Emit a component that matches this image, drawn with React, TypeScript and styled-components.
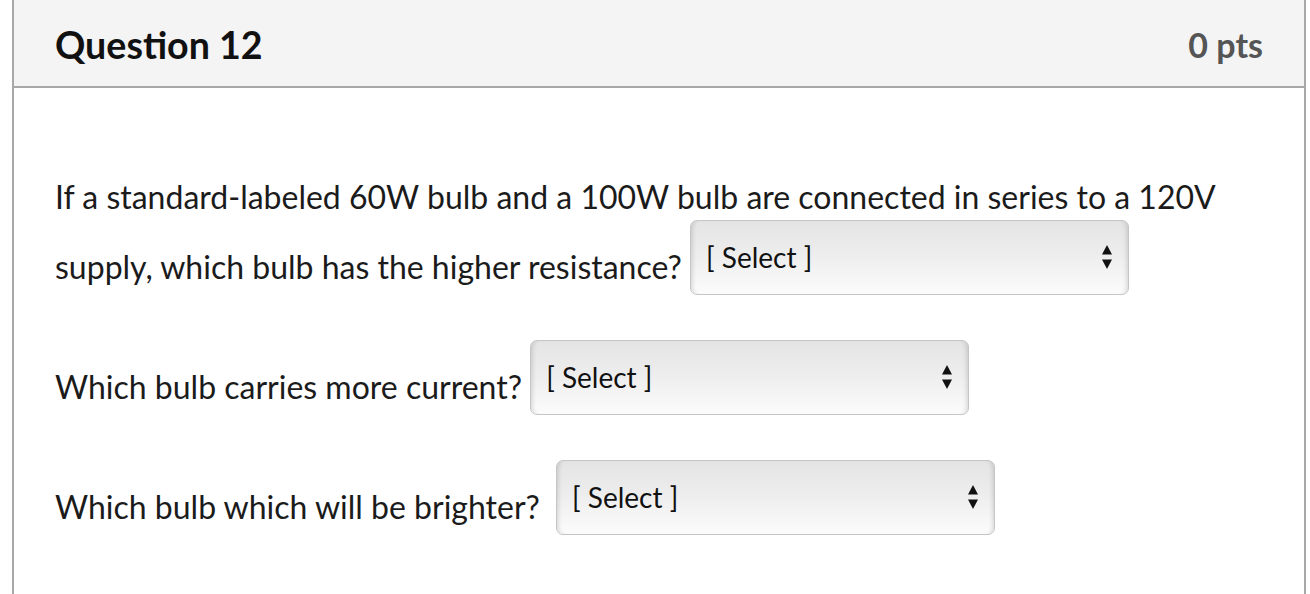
import styled, { createGlobalStyle } from "styled-components";

const GlobalStyle = createGlobalStyle`
  body {
    margin: 0;
    background: #ffffff;
    font-family: Lato, "Liberation Sans", sans-serif;
    overflow: hidden;
  }
`;

const questions = [
  {
    id: "q1",
    text: "If a standard-labeled 60W bulb and a 100W bulb are connected in series to a 120V supply, which bulb has the higher resistance?",
    gap: 0,
  },
  { id: "q2", text: "Which bulb carries more current?", gap: 0 },
  { id: "q3", text: "Which bulb which will be brighter?", gap: 8 },
];

const Arrows = () => (
  <svg width="10" height="24" viewBox="0 0 10 24">
    <path d="M5 0 L10 9.5 L0 9.5 Z" fill="#111" />
    <path d="M0 14.5 L10 14.5 L5 24 Z" fill="#111" />
  </svg>
);

const App = () => {
  return (
    <>
      <GlobalStyle />
      <Page>
        <Card>
          <Header>
            <Title>Question 12</Title>
            <Points>0 pts</Points>
          </Header>
          <Body>
            {questions.map((q) => (
              <Paragraph key={q.id}>
                {q.text}{" "}
                <SelectWrap $gap={q.gap}>
                  <StyledSelect defaultValue="">
                    <option value="">[ Select ]</option>
                    <option value="60">60W bulb</option>
                    <option value="100">100W bulb</option>
                    <option value="same">Same</option>
                  </StyledSelect>
                  <ArrowBox>
                    <Arrows />
                  </ArrowBox>
                </SelectWrap>
              </Paragraph>
            ))}
          </Body>
        </Card>
      </Page>
    </>
  );
};

export default App;

const Page = styled.div`
  padding: 0 4px 0 12px;
`;

const Card = styled.div`
  border: 2px solid #a8a8a8;
  border-top: none;
  min-height: 640px;
`;

const Header = styled.div`
  display: flex;
  justify-content: space-between;
  align-items: center;
  height: 86px;
  padding: 0 41px 0 41px;
  background: #f4f4f4;
  border-bottom: 2px solid #a8a8a8;
`;

const Title = styled.h2`
  margin: 0;
  font-size: 37.6px;
  font-weight: 700;
  color: #111;
  padding-top: 2px;
`;

const Points = styled.div`
  font-size: 34px;
  font-weight: 700;
  color: #555;
  padding-top: 2px;
`;

const Body = styled.div`
  padding: 87px 41px 0 41px;
`;

const Paragraph = styled.p`
  margin: 0 0 45px;
  font-size: 32px;
  line-height: 1.4;
  color: #1b1b1b;
`;

const SelectWrap = styled.span<{ $gap: number }>`
  position: relative;
  display: inline-block;
  vertical-align: 10px;
  margin-left: ${(p) => p.$gap}px;
`;

const StyledSelect = styled.select`
  appearance: none;
  -webkit-appearance: none;
  width: 439px;
  height: 75px;
  padding: 0 40px 0 15px;
  font-family: Lato, "Liberation Sans", sans-serif;
  font-size: 28px;
  color: #111;
  border: 1px solid #c6c6c6;
  border-radius: 7px;
  background: linear-gradient(#e4e4e4 0%, #ededed 45%, #fcfcfc 100%);
  box-shadow: inset 5px 0 5px -4px rgba(0, 0, 0, 0.16),
    inset -5px 0 5px -4px rgba(0, 0, 0, 0.16);
  outline: none;
`;

const ArrowBox = styled.span`
  position: absolute;
  right: 17px;
  top: 0;
  bottom: 0;
  display: flex;
  align-items: center;
  pointer-events: none;
`;
